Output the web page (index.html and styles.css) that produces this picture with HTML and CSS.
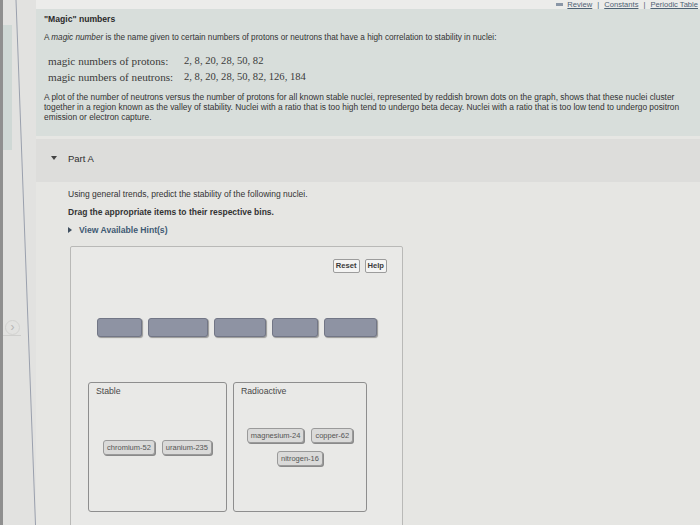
FILE: index.html
```html
<!DOCTYPE html>
<html>
<head>
<meta charset="utf-8">
<link rel="stylesheet" href="styles.css">
</head>
<body>
<div class="page">
  <aside class="sidebar">
    <div class="side-panel"></div>
    <div class="side-nav">
      <span class="side-circle">&#8250;</span>
    </div>
  </aside>
  <main class="main">
    <div class="topbar">
      <span class="tb-icon"></span>
      <a class="tb-link">Review</a><span class="tb-sep">|</span><a class="tb-link">Constants</a><span class="tb-sep">|</span><a class="tb-link">Periodic Table</a>
    </div>
    <section class="intro">
      <h2 class="intro-title">"Magic" numbers</h2>
      <p class="intro-text">A <em>magic number</em> is the name given to certain numbers of protons or neutrons that have a high correlation to stability in nuclei:</p>
      <div class="magic">
        <span class="magic-label">magic numbers of protons:</span><span class="magic-vals">2, 8, 20, 28, 50, 82</span>
        <span class="magic-label">magic numbers of neutrons:</span><span class="magic-vals">2, 8, 20, 28, 50, 82, 126, 184</span>
      </div>
      <p class="intro-para">A plot of the number of neutrons versus the number of protons for all known stable nuclei, represented by reddish brown dots on the graph, shows that these nuclei cluster together in a region known as the valley of stability. Nuclei with a ratio that is too high tend to undergo beta decay. Nuclei with a ratio that is too low tend to undergo positron emission or electron capture.</p>
    </section>
    <div class="part-head">
      <span class="caret-down"></span>
      <span class="part-title">Part A</span>
    </div>
    <section class="part-body">
      <p class="q-text">Using general trends, predict the stability of the following nuclei.</p>
      <p class="q-instr">Drag the appropriate items to their respective bins.</p>
      <div class="hint"><span class="caret-right"></span>View Available Hint(s)</div>
      <div class="dnd">
        <div class="toolbar">
          <button class="btn">Reset</button>
          <button class="btn">Help</button>
        </div>
        <div class="slots">
          <span class="slot w45"></span>
          <span class="slot w60"></span>
          <span class="slot w52"></span>
          <span class="slot w46"></span>
          <span class="slot w53"></span>
        </div>
        <div class="bins">
          <div class="bin bin-stable">
            <div class="bin-label">Stable</div>
            <div class="bin-items">
              <span class="item">chromium-52</span>
              <span class="item">uranium-235</span>
            </div>
          </div>
          <div class="bin bin-radio">
            <div class="bin-label">Radioactive</div>
            <div class="bin-items">
              <span class="item">magnesium-24</span>
              <span class="item">copper-62</span>
              <span class="item">nitrogen-16</span>
            </div>
          </div>
        </div>
      </div>
    </section>
  </main>
  <svg class="edge-line" width="700" height="525" viewBox="0 0 700 525"><line x1="16" y1="0" x2="35.5" y2="525" stroke="#9aa0ad" stroke-width="1"/></svg>
</div>
</body>
</html>
```

FILE: styles.css
```css
* { box-sizing: border-box; }
html, body { margin: 0; padding: 0; }
body {
  width: 700px;
  height: 525px;
  overflow: hidden;
  background: #e6e6e3;
  font-family: "Liberation Sans", Arial, sans-serif;
  color: #333;
}
.page {
  position: relative;
  display: flex;
  width: 700px;
  height: 525px;
  overflow: hidden;
}
.sidebar {
  width: 36px;
  flex: none;
  border-left: 3px solid #8f8f8f;
  background: #e2e2e0;
  display: flex;
  flex-direction: column;
}
.side-panel {
  margin-top: 25px;
  width: 9px;
  height: 125px;
  background: #cfd8d5;
}
.side-nav {
  margin-top: 169px;
  width: 18px;
  height: 17px;
  border-bottom: 1px solid #cfcfcd;
  position: relative;
}
.side-circle {
  position: absolute;
  left: 2px;
  top: 1px;
  width: 15px;
  height: 15px;
  border-radius: 50%;
  border: 1px solid #d2d2d0;
  color: #b5b5b5;
  font-size: 12px;
  line-height: 12px;
  text-align: center;
}
.main {
  flex: 1;
  display: block;
  min-width: 0;
  overflow: hidden;
}
.topbar {
  height: 9px;
  background: #ececea;
  display: flex;
  justify-content: flex-end;
  align-items: flex-end;
  font-size: 7.6px;
  line-height: 8px;
  color: #4d6173;
  padding-right: 2px;
}
.tb-icon {
  width: 7px;
  height: 3px;
  background: #8a96a6;
  margin-right: 4px;
  margin-bottom: 3px;
}
.tb-link { text-decoration: underline; }
.tb-sep { margin: 0 5px; }
.intro {
  background: #d8dedb;
  padding: 5px 6px 14px 8px;
}
.intro-title {
  margin: 0;
  font-size: 8.6px;
  line-height: 10px;
  font-weight: bold;
  color: #2a2a2a;
}
.intro-text {
  margin: 9px 0 0 0;
  font-size: 8.2px;
  line-height: 10px;
}
.magic {
  margin: 10px 0 0 4px;
  display: grid;
  grid-template-columns: 136px auto;
  font-family: "Liberation Serif", "Times New Roman", serif;
  line-height: 16px;
  color: #3a3a3a;
}
.magic-label { font-size: 11.2px; }
.magic-vals { font-size: 10.6px; }
.intro-para {
  margin: 7px 0 0 0;
  font-size: 8.4px;
  line-height: 10px;
}
.part-head {
  margin-top: 3px;
  height: 43px;
  background: #dddddb;
  display: flex;
  align-items: center;
  padding-left: 15px;
  padding-bottom: 5px;
}
.caret-down {
  width: 0;
  height: 0;
  border-left: 3px solid transparent;
  border-right: 3px solid transparent;
  border-top: 4px solid #444;
  margin-right: 11px;
}
.part-title {
  font-size: 9.5px;
  color: #2f2f2f;
}
.part-body {
  padding-left: 32px;
}
.q-text {
  margin: 7px 0 0 0;
  font-size: 8.5px;
  line-height: 10px;
}
.q-instr {
  margin: 8px 0 0 0;
  font-size: 8.5px;
  line-height: 10px;
  font-weight: bold;
  color: #333;
}
.hint {
  margin-top: 8px;
  font-size: 8.6px;
  line-height: 10px;
  font-weight: bold;
  color: #3f5a73;
  display: flex;
  align-items: center;
}
.caret-right {
  width: 0;
  height: 0;
  border-top: 3px solid transparent;
  border-bottom: 3px solid transparent;
  border-left: 4px solid #3f4f60;
  margin-right: 7px;
}
.dnd {
  margin: 11px 0 0 2px;
  width: 333px;
  height: 300px;
  border: 1px solid #b9b9b7;
  border-radius: 2px;
  background: #e9e9e7;
  padding: 12px 15px 0 17px;
}
.toolbar {
  display: flex;
  justify-content: flex-end;
  gap: 5px;
}
.btn {
  font-family: "Liberation Sans", Arial, sans-serif;
  font-size: 7.6px;
  font-weight: bold;
  color: #3a3a3a;
  background: #f4f4f3;
  border: 1px solid #9c9c9c;
  border-radius: 2px;
  height: 14px;
  padding: 0 2px;
  line-height: 12px;
}
.slots {
  margin-top: 45px;
  margin-left: -2px;
  display: flex;
  justify-content: center;
  gap: 6px;
}
.slot {
  height: 19px;
  background: #8e93a3;
  border: 1px solid #727686;
  border-radius: 3px;
  box-shadow: 1px 1px 1px rgba(0,0,0,0.35);
}
.w45 { width: 45px; }
.w60 { width: 60px; }
.w52 { width: 52px; }
.w46 { width: 46px; }
.w53 { width: 53px; }
.bins {
  margin-top: 45px;
  display: flex;
  gap: 6px;
}
.bin {
  height: 130px;
  border: 1px solid #8e8e8e;
  border-radius: 3px;
  background: #e9e9e7;
  display: flex;
  flex-direction: column;
}
.bin-stable { width: 139px; }
.bin-radio { width: 134px; }
.bin-label {
  font-size: 8.7px;
  line-height: 10px;
  color: #4a4a4a;
  padding: 3px 0 0 7px;
}
.bin-items {
  flex: 1;
  display: flex;
  flex-wrap: wrap;
  justify-content: center;
  align-content: center;
  column-gap: 7px;
  row-gap: 8px;
  padding: 0 3px 13px 3px;
}
.item {
  height: 15px;
  padding: 0 3px;
  font-size: 7.5px;
  line-height: 13px;
  color: #555;
  background: #dadad9;
  border: 1px solid #9a9a9a;
  border-radius: 3px;
  box-shadow: 1px 1px 0 #8a8a8a;
  white-space: nowrap;
}
.edge-line {
  position: absolute;
  left: 0;
  top: 0;
  pointer-events: none;
}
```
